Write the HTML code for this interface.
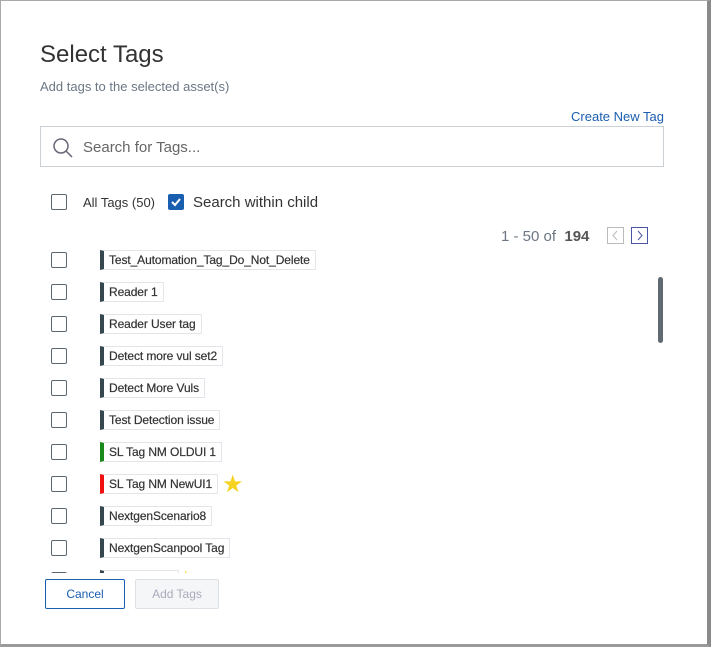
<!DOCTYPE html>
<html><head><style>
*{box-sizing:border-box;margin:0;padding:0}
body{width:711px;height:647px;background:#fff;font-family:"Liberation Sans",sans-serif;position:relative;overflow:hidden}
.frame{position:absolute;left:0;top:0;width:711px;height:647px;border:1px solid #aaa;border-right:4px solid #8a8a8a;border-bottom:3px solid #9a9a9a}
h1{position:absolute;left:40px;top:41px;font-size:24px;font-weight:normal;color:#333}
.sub{position:absolute;left:40px;top:79px;font-size:13px;color:#6b7785}
.create{position:absolute;right:47px;top:109px;font-size:13px;color:#1a5eb0}
.search{position:absolute;left:40px;top:126px;width:624px;height:41px;border:1px solid #ccd1d6}
.search span{position:absolute;left:42px;top:12px;font-size:15px;color:#666}
.cb{position:absolute;width:16px;height:16px;border:1.5px solid #5a6670;border-radius:2px;background:#fff}
.lbl{position:absolute;font-size:13px;color:#333}
.pg{position:absolute;left:501px;top:228px;font-size:15px;color:#6b7785}
.pg b{color:#555}
.nav{position:absolute;top:227px;width:17px;height:17px;border:1px solid #bbb}
.list{position:absolute;left:0;top:244px;width:700px;height:329px;overflow:hidden}
.row{position:absolute;left:0;height:32px;width:600px}
.row .cb{left:51px;top:8px}
.tag{position:absolute;left:100px;top:6px;height:20px;border:1px solid #e2e6ea;border-left:4px solid #37474f;padding:0 5px 0 5px;font-size:12px;line-height:18px;color:#333;-webkit-text-stroke:.2px #333;letter-spacing:-0.1px}
.star{position:absolute;top:2px;color:#f5d320;font-size:24px}
.sb{position:absolute;left:658px;top:277px;width:5px;height:66px;background:#5f6a73;border-radius:3px}
.btn{position:absolute;top:579px;height:30px;font-size:12px;text-align:center;line-height:28px;border-radius:2px}
</style></head><body>
<div class="frame"></div>
<h1>Select Tags</h1>
<div class="sub">Add tags to the selected asset(s)</div>
<div class="create">Create New Tag</div>
<div class="search">
<svg style="position:absolute;left:11px;top:10px" width="22" height="22" viewBox="0 0 22 22"><circle cx="9" cy="9" r="7" fill="none" stroke="#667" stroke-width="1.5"/><line x1="14" y1="14" x2="20" y2="20" stroke="#667" stroke-width="1.5"/></svg>
<span>Search for Tags...</span></div>
<div class="cb" style="left:51px;top:194px"></div>
<div class="lbl" style="left:83px;top:195px">All Tags (50)</div>
<div style="position:absolute;left:168px;top:194px;width:16px;height:16px;background:#1a5eb0;border-radius:2px"><svg width="16" height="16"><path d="M4 8 L7 11 L12 5" fill="none" stroke="#fff" stroke-width="2"/></svg></div>
<div class="lbl" style="left:193px;top:194px;font-size:15px">Search within child</div>
<div class="pg">1 - 50 of &nbsp;<b>194</b></div>
<div class="nav" style="left:607px"><svg width="15" height="15"><path d="M9 3 L5 7.5 L9 12" fill="none" stroke="#bbb"/></svg></div>
<div class="nav" style="left:631px;border-color:#4a55a8"><svg width="15" height="15"><path d="M6 3 L10 7.5 L6 12" fill="none" stroke="#4a55a8"/></svg></div>
<div class="list">
<div class="row" style="top:0"><div class="cb"></div><div class="tag">Test_Automation_Tag_Do_Not_Delete</div></div>
<div class="row" style="top:32px"><div class="cb"></div><div class="tag">Reader 1</div></div>
<div class="row" style="top:64px"><div class="cb"></div><div class="tag">Reader User tag</div></div>
<div class="row" style="top:96px"><div class="cb"></div><div class="tag">Detect more vul set2</div></div>
<div class="row" style="top:128px"><div class="cb"></div><div class="tag">Detect More Vuls</div></div>
<div class="row" style="top:160px"><div class="cb"></div><div class="tag">Test Detection issue</div></div>
<div class="row" style="top:192px"><div class="cb"></div><div class="tag" style="border-left-color:#1a8a1a">SL Tag NM OLDUI 1</div></div>
<div class="row" style="top:224px"><div class="cb"></div><div class="tag" style="border-left-color:#f01010">SL Tag NM NewUI1</div><div class="star" style="left:222px">★</div></div>
<div class="row" style="top:256px"><div class="cb"></div><div class="tag">NextgenScenario8</div></div>
<div class="row" style="top:288px"><div class="cb"></div><div class="tag">NextgenScanpool Tag</div></div>
<div class="row" style="top:320px"><div class="cb"></div><div class="tag">Reader 2 xx</div><div class="star" style="left:175px">★</div></div>
</div>
<div class="sb"></div>
<div class="btn" style="left:45px;width:80px;border:1px solid #1a5eb0;color:#1a5eb0">Cancel</div>
<div class="btn" style="left:135px;width:84px;border:1px solid #dde1e5;background:#f5f6f7;color:#aab">Add Tags</div>
</body></html>
